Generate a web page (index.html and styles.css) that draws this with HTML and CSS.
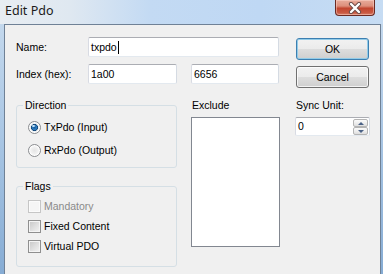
FILE: index.html
```html
<!DOCTYPE html>
<html>
<head>
<meta charset="utf-8">
<title>Edit Pdo</title>
<link rel="stylesheet" href="styles.css">
</head>
<body>
<div class="window">
  <div class="titlebar">
    <span class="title">Edit Pdo</span>
    <div class="close">
      <svg width="14" height="12" viewBox="0 0 14 12">
        <path d="M3 2 L11 10 M11 2 L3 10" stroke="#6a4a46" stroke-width="4.2" stroke-linecap="round" fill="none"/>
        <path d="M3 2 L11 10 M11 2 L3 10" stroke="#ffffff" stroke-width="2.4" stroke-linecap="round" fill="none"/>
      </svg>
    </div>
  </div>
  <div class="frame">
    <div class="client">
      <div class="top">
        <div class="fields">
          <div class="row">
            <span class="lbl">Name:</span>
            <div class="edit w-name">txpdo<span class="caret"></span></div>
          </div>
          <div class="row row2">
            <span class="lbl">Index (hex):</span>
            <div class="edit w-idx">1a00</div>
            <div class="edit w-idx2">6656</div>
          </div>
        </div>
        <div class="buttons">
          <div class="btn default">OK</div>
          <div class="btn cancel">Cancel</div>
        </div>
      </div>
      <div class="bottom">
        <div class="groups">
          <fieldset class="group dir">
            <legend>Direction</legend>
            <div class="opt"><span class="radio checked"></span><span>TxPdo (Input)</span></div>
            <div class="opt next-radio"><span class="radio"></span><span>RxPdo (Output)</span></div>
          </fieldset>
          <fieldset class="group flags">
            <legend>Flags</legend>
            <div class="opt disabled"><span class="check"></span><span>Mandatory</span></div>
            <div class="opt next-check"><span class="check"></span><span>Fixed Content</span></div>
            <div class="opt next-check"><span class="check"></span><span>Virtual PDO</span></div>
          </fieldset>
        </div>
        <div class="exclude">
          <div class="cap">Exclude</div>
          <div class="listbox"></div>
        </div>
        <div class="sync">
          <div class="cap">Sync Unit:</div>
          <div class="spin">
            <span class="spin-val">0</span>
            <div class="spin-btns">
              <span class="sb up"></span>
              <span class="sb down"></span>
            </div>
          </div>
        </div>
      </div>
    </div>
  </div>
</div>
</body>
</html>
```
FILE: styles.css
```css
html, body {
  margin: 0;
  padding: 0;
}
body {
  width: 383px;
  height: 274px;
  overflow: hidden;
  font-family: "Liberation Sans", Arial, sans-serif;
  font-size: 10.5px;
  color: #000;
}
.window {
  width: 383px;
  height: 274px;
  display: flex;
  flex-direction: column;
  background: linear-gradient(to bottom, #c9dcef 0%, #a9c6e4 50%, #86acd4 100%);
}
.titlebar {
  height: 24px;
  flex: none;
  display: flex;
  justify-content: space-between;
  align-items: flex-start;
  background: linear-gradient(to right, #e8edf2 0px, #dfe8f1 70px, #c3daf3 150px, #bfd8f4 260px, #c6dcf3 100%);
}
.title {
  font-family: "Noto Sans", "Open Sans", sans-serif;
  font-size: 12.5px;
  line-height: 17px;
  padding: 2px 0 0 5px;
  color: #1b1b1b;
}
.close {
  width: 40px;
  height: 16px;
  margin-right: 8px;
  box-sizing: border-box;
  border: 1px solid #6b2a22;
  border-top: none;
  border-radius: 0 0 4px 4px;
  background: linear-gradient(to bottom, #e8ab9b 0%, #dd8f7c 40%, #c2452f 55%, #c95a43 85%, #d9816a 100%);
  box-shadow: inset 0 0 0 1px rgba(255, 220, 210, 0.45);
  display: flex;
  align-items: center;
  justify-content: center;
}
.close svg {
  display: block;
}
.frame {
  flex: 1;
  display: flex;
  padding: 0 2px 0 4px;
  min-height: 0;
}
.client {
  flex: 1;
  background: #f0f0f0;
  border: 1px solid #6f8196;
  border-bottom: none;
  padding: 12px 0 0 11px;
}
.top {
  display: flex;
  align-items: flex-start;
}
.fields {
  width: 263px;
}
.row {
  display: flex;
  align-items: center;
  height: 20px;
}
.row2 {
  margin-top: 7px;
}
.lbl {
  width: 72px;
  line-height: 13px;
  flex: none;
}
.edit {
  box-sizing: border-box;
  height: 20px;
  background: #fff;
  border: 1px solid;
  border-color: #abadb3 #d5dbe3 #e3e9ef #d8dbe3;
  border-radius: 2px;
  padding-left: 2px;
  line-height: 18px;
  display: flex;
  align-items: center;
}
.w-name { width: 191px; }
.w-idx { width: 89px; }
.w-idx2 { width: 88px; margin-left: 14px; }
.caret {
  display: inline-block;
  width: 1px;
  height: 13px;
  background: #000;
  margin-left: 1px;
}
.buttons {
  margin-left: 17px;
  margin-top: 1px;
  width: 73px;
}
.btn {
  box-sizing: border-box;
  height: 22px;
  border: 1px solid #707070;
  border-radius: 3px;
  background: linear-gradient(to bottom, #f2f2f2 0%, #ebebeb 50%, #dddddd 51%, #cfcfcf 100%);
  box-shadow: inset 0 0 0 1px rgba(255, 255, 255, 0.75);
  display: flex;
  align-items: center;
  justify-content: center;
  line-height: 13px;
}
.btn.default {
  border-color: #3c7fb1;
  box-shadow: inset 0 0 0 1px #92cbe8;
}
.btn.cancel {
  margin-top: 6px;
}
.bottom {
  display: flex;
  align-items: flex-start;
  margin-top: 11px;
}
.groups {
  width: 161px;
  flex: none;
}
.group {
  margin: 0;
  min-width: 0;
  border: 1px solid #d5dfe5;
  border-radius: 3px;
  padding: 0 4px 0 6px;
}
.group legend {
  padding: 0 2px;
  line-height: 13px;
}
.dir {
  padding-top: 7px;
  padding-bottom: 9px;
}
.flags {
  margin-top: 12px;
  padding-top: 5px;
  padding-bottom: 12px;
}
.opt {
  display: flex;
  align-items: center;
  height: 16px;
  line-height: 13px;
}
.next-radio { margin-top: 7px; }
.next-check { margin-top: 4px; }
.radio {
  box-sizing: border-box;
  width: 13px;
  height: 13px;
  margin: 0 3px 0 5px;
  border-radius: 50%;
  border: 1px solid #8b8d90;
  background: radial-gradient(circle at 50% 50%, #e4e4e4 0%, #f4f4f4 55%, #fbfbfb 100%);
  box-shadow: inset 0 0 0 1px #fff;
  position: relative;
  flex: none;
}
.radio.checked {
  background: radial-gradient(circle at 50% 50%, #1a5d9c 0%, #2d7cc0 28%, #0e3f70 42%, #e8ecef 48%, #f7f7f7 100%);
}
.radio.checked::after {
  content: "";
  position: absolute;
  left: 3px;
  top: 3px;
  width: 3px;
  height: 2px;
  border-radius: 50%;
  background: rgba(210, 238, 255, 0.95);
}
.check {
  box-sizing: border-box;
  width: 13px;
  height: 13px;
  margin: 0 3px 0 5px;
  border: 1px solid #8f8f8f;
  background: linear-gradient(135deg, #c6c6c6 0%, #dedede 50%, #f3f3f3 100%);
  box-shadow: inset 0 0 0 1px #f4f4f4;
  flex: none;
}
.disabled {
  color: #8a8a8a;
}
.disabled .check {
  border-color: #c6c6c6;
  background: #f5f5f5;
  box-shadow: inset 0 0 0 1px #fbfbfb;
}
.exclude {
  margin-left: 14px;
  width: 89px;
  flex: none;
}
.cap {
  line-height: 13px;
  padding-left: 1px;
}
.listbox {
  margin-top: 5px;
  box-sizing: border-box;
  height: 130px;
  background: #fff;
  border: 1px solid #828790;
}
.sync {
  margin-left: 15px;
  width: 75px;
  flex: none;
}
.spin {
  margin-top: 5px;
  box-sizing: border-box;
  height: 19px;
  background: #fff;
  border: 1px solid;
  border-color: #abadb3 #d5dbe3 #e3e9ef #d8dbe3;
  border-radius: 2px;
  display: flex;
  align-items: flex-start;
}
.spin-val {
  padding-left: 2px;
  line-height: 17px;
}
.spin-btns {
  margin-left: auto;
  margin-right: 1px;
  padding-top: 1px;
  width: 15px;
  display: flex;
  flex-direction: column;
}
.sb {
  box-sizing: border-box;
  height: 8px;
  border: 1px solid #b4b4b4;
  border-radius: 2px;
  background: linear-gradient(to bottom, #fbfbfb 0%, #eeeeee 50%, #dedede 100%);
  display: flex;
  align-items: center;
  justify-content: center;
}
.sb::after {
  content: "";
  width: 0;
  height: 0;
  border-left: 3px solid transparent;
  border-right: 3px solid transparent;
}
.sb.up::after {
  border-bottom: 3px solid #4b6286;
}
.sb.down::after {
  border-top: 3px solid #4b6286;
}
```
